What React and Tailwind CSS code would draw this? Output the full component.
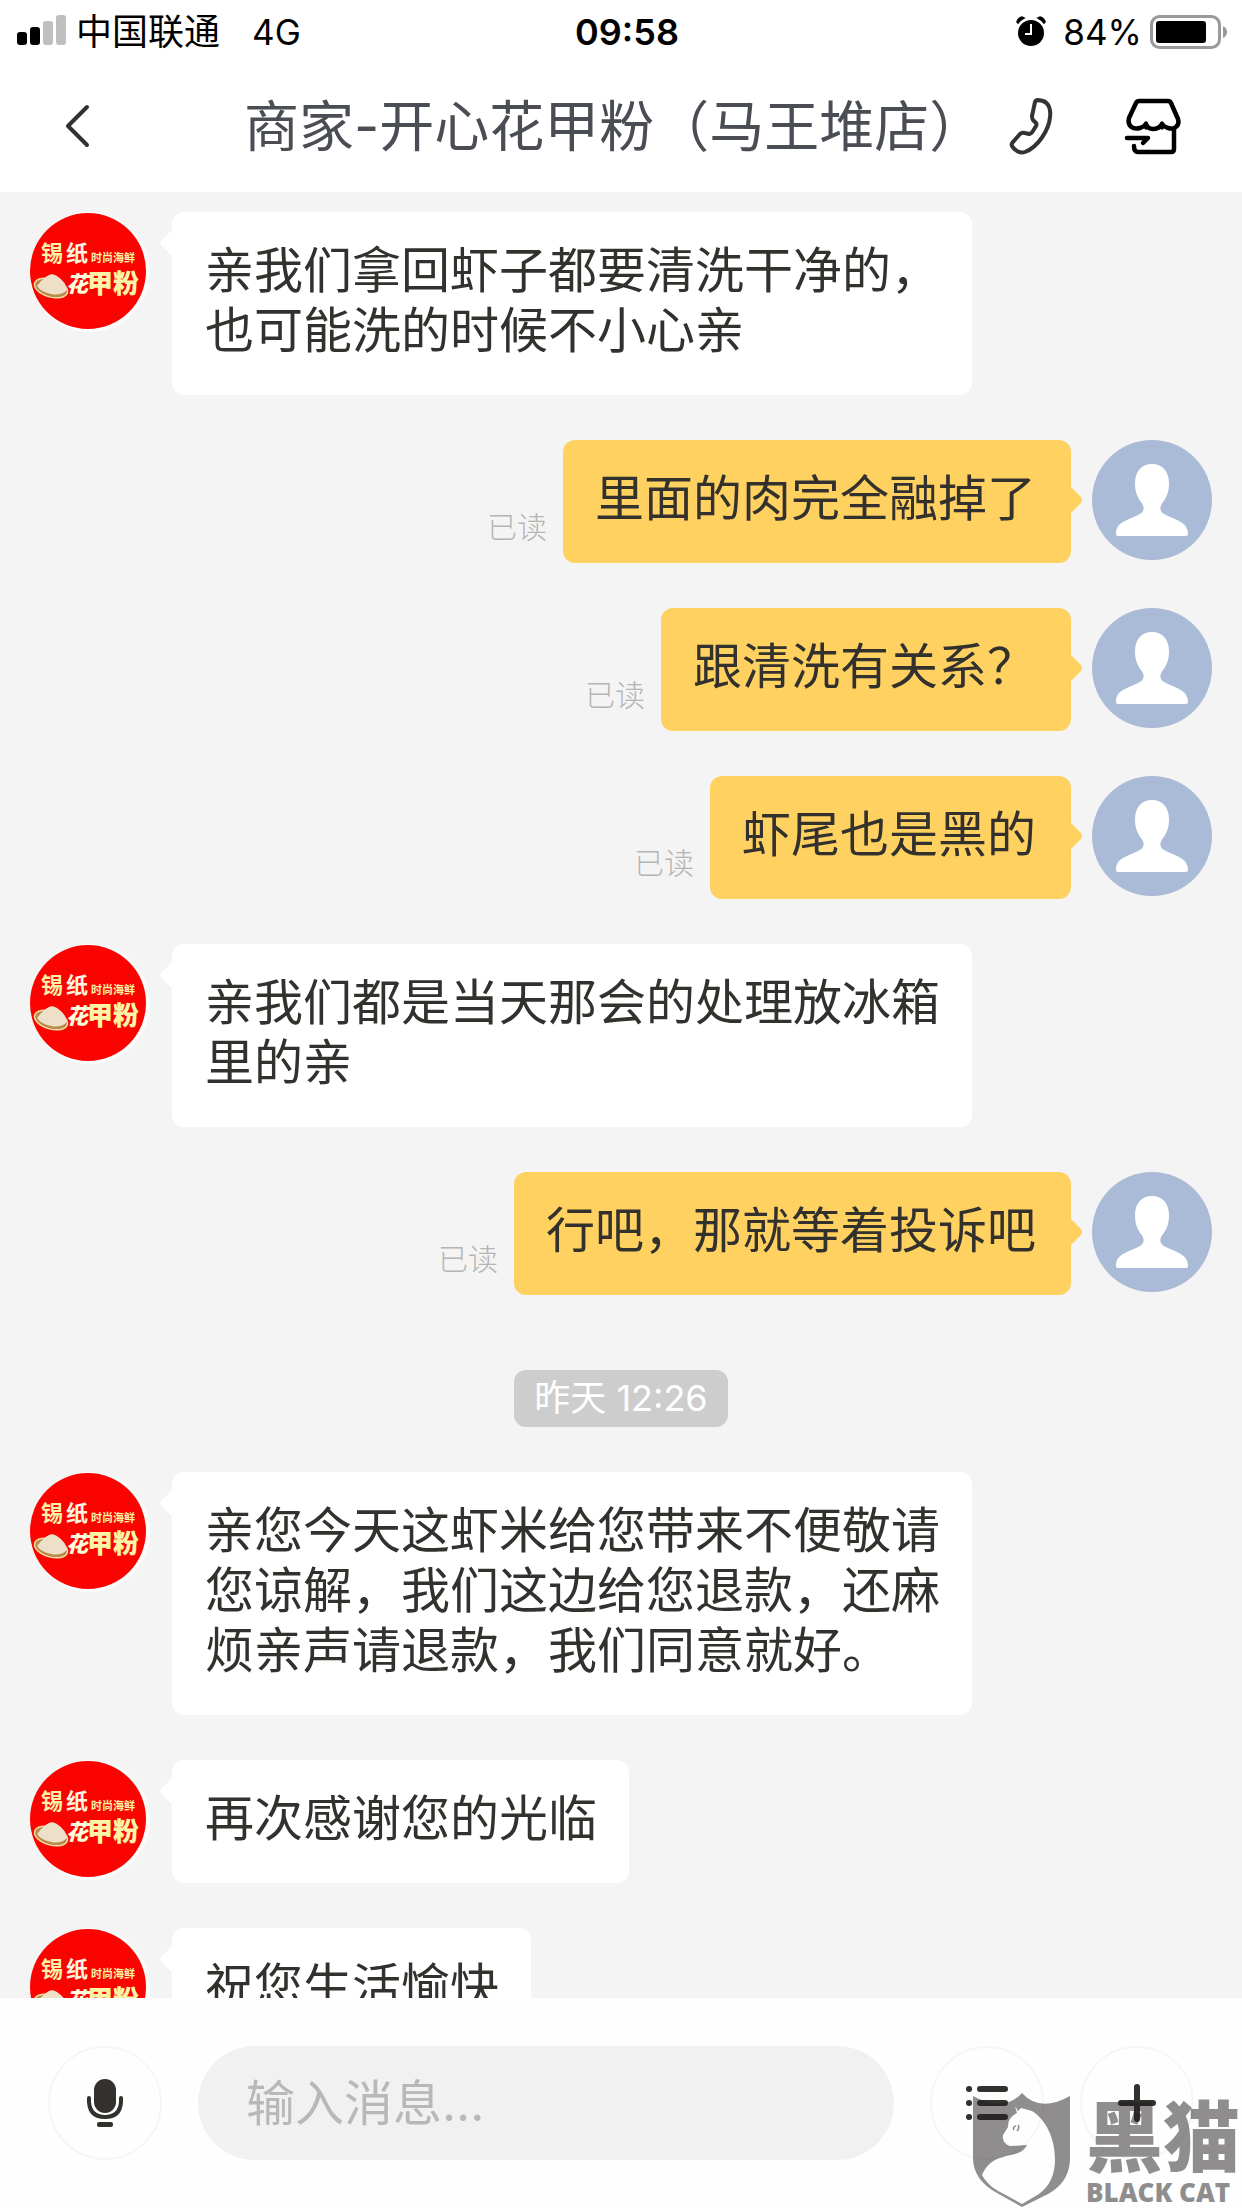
import React from 'react';

const messages = [
  { from: 'shop', text: '亲我们拿回虾子都要清洗干净的，也可能洗的时候不小心亲' },
  { from: 'me', text: '里面的肉完全融掉了' },
  { from: 'me', text: '跟清洗有关系？' },
  { from: 'me', text: '虾尾也是黑的' },
  { from: 'shop', text: '亲我们都是当天那会的处理放冰箱里的亲' },
  { from: 'me', text: '行吧，那就等着投诉吧' },
  { from: 'time', text: '昨天 12:26' },
  { from: 'shop', text: '亲您今天这虾米给您带来不便敬请您谅解，我们这边给您退款，还麻烦亲声请退款，我们同意就好。' },
  { from: 'shop', text: '再次感谢您的光临' },
  { from: 'shop', text: '祝您生活愉快' },
];

function StatusBar() {
  return (
    <div className="grid h-16 grid-cols-3 items-center pl-4 pr-3 text-[35px] text-black">
      <div className="flex items-center whitespace-nowrap">
        <svg className="mr-2.5 h-9 w-[50px] shrink-0" viewBox="0 0 50 36">
          <rect x="1" y="18" width="10" height="13" rx="3" />
          <rect x="14" y="13" width="10" height="18" rx="3" />
          <rect x="27" y="7" width="10" height="24" rx="3" fill="#bfbfbf" />
          <rect x="40" y="1" width="10" height="30" rx="3" fill="#bfbfbf" />
        </svg>
        <span className="text-[36px]">中国联通</span>
        <span className="ml-8">4G</span>
      </div>
      <div className="pl-2 text-center text-[36px] font-semibold">09:58</div>
      <div className="flex items-center justify-end whitespace-nowrap">
        <svg className="mr-4 h-9 w-8" viewBox="0 0 32 36">
          <circle cx="16" cy="19" r="13" />
          <path d="M2 8Q3 4 7 3L9 4Q5 6 3 9ZM30 8Q29 4 25 3L23 4Q27 6 29 9Z" stroke="#000" strokeWidth="1.500" />
          <path d="M16 10V20H10" fill="none" stroke="#fff" strokeWidth="2" />
        </svg>
        <span>84%</span>
        <svg className="ml-2 h-9 w-[80px]" viewBox="0 0 80 36">
          <rect x="1.500" y="2.500" width="68" height="31" rx="8" fill="none" stroke="#999" strokeWidth="3" />
          <rect x="6" y="7" width="50" height="22" rx="3" />
          <path d="M73 12Q77 14 77 18T73 24Z" fill="#999" />
        </svg>
      </div>
    </div>
  );
}

function ChatHeader() {
  return (
    <header className="flex h-32 items-center px-[60px] pb-1 text-[#4a4d54]">
      <button aria-label="返回" className="flex w-[184px] shrink-0">
        <svg className="h-[50px] w-9" viewBox="0 0 36 50" fill="none" stroke="#33312d" strokeWidth="4" strokeLinecap="round" strokeLinejoin="round">
          <path d="M27 6L8 25L27 44" />
        </svg>
      </button>
      <h1 className="flex-1 whitespace-nowrap text-[55px] leading-[60px]">商家-开心花甲粉（马王堆店）</h1>
      <button aria-label="电话" className="shrink-0">
        <svg className="h-[60px] w-[46px]" viewBox="0 0 46 60" fill="none" stroke="#333" strokeWidth="4" strokeLinejoin="round">
          <path d="M27 6C28 3 31 4 35 5C41 7 43 14 42 21C41 34 30 51 17 56C12 58 6 54 4 50Q3 48 5 46L12 38Q14 36 17 37L21 38Q23 38 25 35L28 30Q29 28 28 27L25 24Q24 23 24 20Z" />
        </svg>
      </button>
      <button aria-label="进店" className="ml-[70px] shrink-0">
        <svg className="h-[60px] w-[58px]" viewBox="0 0 58 60" fill="none" stroke="#000" strokeWidth="4.500" strokeLinecap="round" strokeLinejoin="round">
          <path d="M15 5H44Q46 5 47 7L54 23C56 30 50 34 44 32Q40 31 38 28Q35 33 29 33Q24 33 22 28Q20 31 16 32C9 34 3 30 5 22L12 7Q13 5 15 5Z" />
          <path d="M22 32V27M38 32V27" strokeWidth="3.500" />
          <path d="M50 33V53Q50 56 47 56H14Q10 56 10 50M3 42H24L19 47" />
        </svg>
      </button>
    </header>
  );
}

function ShopAvatar() {
  return (
    <div className="h-[120px] w-[120px] shrink-0 rounded-full bg-[#fbfbfb]">
      <svg className="h-[120px] w-[120px]" viewBox="0 0 120 120" fontFamily="'Noto Sans CJK SC', sans-serif" fontWeight="700" fill="#fbf3a8">
        <circle cx="58" cy="59" r="58" fill="#f90400" />
        <text x="11" y="49" fontSize="22">锡</text>
        <text x="36" y="49" fontSize="22" fill="#fff6e0">纸</text>
        <text x="61" y="50" fontSize="11">时尚海鲜</text>
        <ellipse cx="21" cy="76" rx="17" ry="9" transform="rotate(16 21 76)" fill="#b98a50" stroke="#f5dc9a" strokeWidth="1.500" />
        <path d="M7 74Q13 66 19 63Q23 61 27 64Q36 70 37 78Q31 84 21 82Q11 80 7 74Z" fill="#eee0c8" />
        <text x="36" y="80" fontSize="22" fontWeight="900" fontStyle="italic" fill="#ffffe0">花</text>
        <text x="57" y="81" fontSize="26" fontWeight="900">甲粉</text>
      </svg>
    </div>
  );
}

function UserAvatar() {
  return (
    <svg className="h-[120px] w-[120px] shrink-0" viewBox="0 0 120 120">
      <circle cx="60" cy="60" r="60" fill="#aabbd7" />
      <path d="M60 24C70 24 77 31 77 43C77 53 74 58 71 62C68 66 68 69 69 71C71 75 80 77 85 80C94 84 96 89 96 94Q96 96 94 96H26Q24 96 24 94C24 88 26 84 35 80C40 77 49 75 51 71C52 69 52 66 49 62C46 58 43 53 43 43C43 31 50 24 60 24Z" fill="#fff" />
    </svg>
  );
}

function Message({ from, text }) {
  if (from === 'time') {
    return (
      <div className="mt-[30px] flex justify-center">
        <time className="rounded-xl bg-[#cdcdcd] px-5 text-[36px] leading-[57px] text-white">{text}</time>
      </div>
    );
  }
  if (from === 'me') {
    return (
      <div className="flex items-start justify-end">
        <span className="mr-4 mt-[67px] text-[30px] font-light leading-10 text-[#b5b5b5]">已读</span>
        <div className="relative rounded-xl bg-[#ffd161] pb-[34px] pl-8 pr-[35px] pt-[29px] text-[49px] leading-[60px]">
          {text}
          <svg className="absolute left-full top-[46px] h-7 w-[11px]" viewBox="0 0 11 28">
            <path d="M0 1L9 10Q13 14 9 18L0 27Z" fill="#ffd161" />
          </svg>
        </div>
        <div className="ml-[21px]"><UserAvatar /></div>
      </div>
    );
  }
  return (
    <div className="flex items-start">
      <ShopAvatar />
      <div className="relative ml-[22px] max-w-[800px] rounded-xl bg-white pb-[34px] pl-[33px] pr-8 pt-[29px] text-[49px] leading-[60px]">
        {text}
        <svg className="absolute right-full top-[17px] h-7 w-3" viewBox="0 0 12 28">
          <path d="M12 1L2 11Q-1 14 2 17L12 27Z" fill="#fff" />
        </svg>
      </div>
    </div>
  );
}

const roundButton = 'flex h-[114px] w-[114px] shrink-0 items-center justify-center rounded-full border-2 border-[#f6f6f6]';

function Composer() {
  return (
    <footer className="flex shrink-0 items-center gap-9 bg-[#fefefe] px-12 py-12">
      <button aria-label="语音" className={roundButton}>
        <svg className="h-[50px] w-10" viewBox="0 0 40 50" fill="#33312d">
          <rect x="9" y="1" width="22" height="34" rx="11" />
          <path d="M4 20V24Q5 39 20 39T36 24V20" fill="none" stroke="#33312d" strokeWidth="4" strokeLinecap="round" />
          <rect x="12" y="44" width="16" height="5" rx="2" />
        </svg>
      </button>
      <input aria-label="输入消息" placeholder="输入消息..." className="h-[114px] min-w-0 flex-1 rounded-full bg-[#f1f1f1] px-12 text-[49px] placeholder:text-[#b8b8b8] placeholder:opacity-100" />
      <button aria-label="常用语" className={roundButton}>
        <svg className="h-10 w-11" viewBox="0 0 44 40" stroke="#33312d" strokeWidth="6" strokeLinecap="round">
          <path d="M4 6H4.100M4 20H4.100M4 34H4.100M15 6H40M15 20H40M15 34H40" />
        </svg>
      </button>
      <button aria-label="更多" className={roundButton}>
        <svg className="h-10 w-10" viewBox="0 0 40 40" stroke="#33312d" strokeWidth="6" strokeLinecap="round">
          <path d="M20 4V36M4 20H36" />
        </svg>
      </button>
    </footer>
  );
}

function Watermark() {
  return (
    <div className="pointer-events-none absolute bottom-0 right-0 flex items-end text-[#231f20] opacity-50">
      <svg className="mr-3.5 h-[115px] w-[100px]" viewBox="0 0 100 115">
        <path
          fillRule="evenodd"
          fill="currentColor"
          d="M1 3Q32 20 50 0Q68 20 98 3V65C98 87 84 98 70 104L50 114L25 100C10 92 1 80 1 65ZM43 13L45 20C39 23 36 27 36 34L31 42C30 47 33 52 39 53L55 52C50 62 40 61 31 64C22 66 14 72 10 82C15 91 22 96 30 100L50 111L67 101C78 93 83 81 83 67C83 45 74 27 60 18L49 15L46 18Z"
        />
        <path d="M42 37Q40 34 44 33M45 38Q48 35 46 32" fill="none" stroke="currentColor" strokeWidth="1.500" />
      </svg>
      <div className="flex w-[156px] flex-col gap-1">
        <span className="whitespace-nowrap text-[77px] font-black leading-[76px]">黑猫</span>
        <span className="whitespace-nowrap pb-1 font-['Open_Sans'] text-[26px] font-extrabold leading-6">BLACK CAT</span>
      </div>
    </div>
  );
}

export default function App() {
  return (
    <div className="relative flex h-screen flex-col overflow-hidden bg-[#f4f4f4] font-['Inter','Noto_Sans_CJK_SC',sans-serif] text-[#33312d]">
      <div className="shrink-0 bg-white">
        <StatusBar />
        <ChatHeader />
      </div>
      <main className="flex min-h-0 flex-1 flex-col gap-[45px] overflow-hidden px-[30px] pt-5">
        {messages.map((message, index) => (
          <Message key={index} from={message.from} text={message.text} />
        ))}
      </main>
      <Composer />
      <Watermark />
    </div>
  );
}
